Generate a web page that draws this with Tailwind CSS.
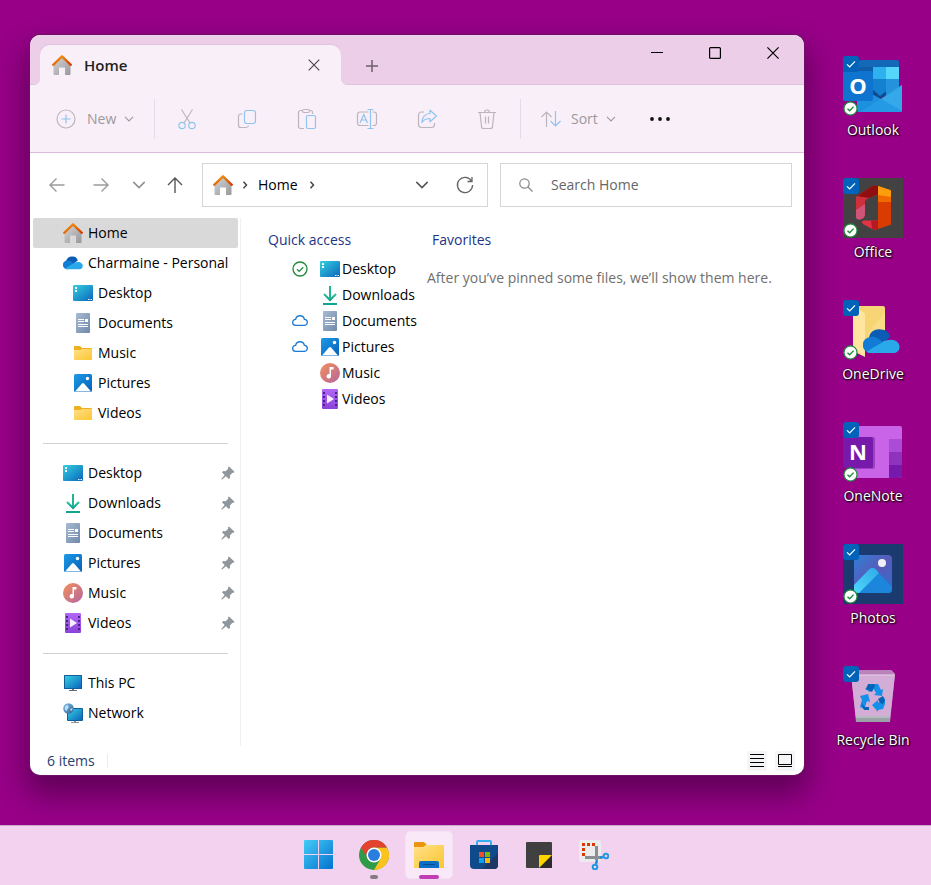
<!DOCTYPE html>
<html lang="en">

<head>
    <meta charset="UTF-8">
    <meta name="viewport" content="width=device-width, initial-scale=1.0">
    <title>Home - File Explorer</title>
    <script src="https://cdn.jsdelivr.net/npm/@tailwindcss/browser@4"></script>
</head>

<body class="flex min-h-screen flex-col bg-[#980088] font-['Open_Sans','Noto_Sans',sans-serif] text-sm text-black">

    <!-- shared icons -->
    <svg class="absolute size-0" aria-hidden="true">
        <defs>
            <linearGradient id="g-roof" x1="0" y1="0" x2="1" y2="1">
                <stop offset="0" stop-color="#f5a010" />
                <stop offset="1" stop-color="#d83b01" />
            </linearGradient>
            <linearGradient id="g-wall" x1="0" y1="0" x2="1" y2="1">
                <stop offset="0" stop-color="#d4d4d6" />
                <stop offset="1" stop-color="#98989c" />
            </linearGradient>
            <linearGradient id="g-screen" x1="0" y1="0" x2="1" y2="1">
                <stop offset="0" stop-color="#35d0e0" />
                <stop offset="1" stop-color="#0a66bd" />
            </linearGradient>
            <linearGradient id="g-doc" x1="0" y1="0" x2="1" y2="1">
                <stop offset="0" stop-color="#a9bbd2" />
                <stop offset="1" stop-color="#6f89aa" />
            </linearGradient>
            <linearGradient id="g-folder" x1="0" y1="0" x2="1" y2="1">
                <stop offset="0" stop-color="#ffe08a" />
                <stop offset="1" stop-color="#fcc630" />
            </linearGradient>
            <linearGradient id="g-pic" x1="0" y1="0" x2="1" y2="1">
                <stop offset="0" stop-color="#1d9be6" />
                <stop offset="1" stop-color="#0760b8" />
            </linearGradient>
            <linearGradient id="g-music" x1="0" y1="0" x2="1" y2="1">
                <stop offset="0" stop-color="#f2915a" />
                <stop offset="1" stop-color="#b565a0" />
            </linearGradient>
            <linearGradient id="g-video" x1="0" y1="0" x2="0" y2="1">
                <stop offset="0" stop-color="#b268f5" />
                <stop offset="1" stop-color="#8a42da" />
            </linearGradient>
            <linearGradient id="g-down" x1="0" y1="0" x2="0" y2="1">
                <stop offset="0" stop-color="#2ec49a" />
                <stop offset="1" stop-color="#0c9d8c" />
            </linearGradient>
            <linearGradient id="g-globe" x1="0" y1="0" x2="1" y2="1">
                <stop offset="0" stop-color="#7fc0ee" />
                <stop offset="1" stop-color="#33618f" />
            </linearGradient>
            <linearGradient id="g-win" x1="0" y1="0" x2="1" y2="1">
                <stop offset="0" stop-color="#44ccf5" />
                <stop offset="1" stop-color="#0572d0" />
            </linearGradient>
        </defs>
        <symbol id="home" viewBox="0 0 20 20">
            <path d="M1.500 10 10 2.500l8.500 7.500V19a1 1 0 0 1-1 1H13v-7.500H7V20H2.500a1 1 0 0 1-1-1z" fill="url(#g-wall)" />
            <path d="M1.200 9.800 10 1.300l8.800 8.500" fill="none" stroke="url(#g-roof)" stroke-width="2.300" stroke-linecap="round" stroke-linejoin="round" />
        </symbol>
        <symbol id="onedrive" viewBox="20 23 37 37">
            <path d="M26 38c1-7 7-9.500 12-8.500 5 0 8 3 9.500 7.500L36 45z" fill="#0a5cb5" />
            <path d="M28 53a8 8 0 0 1-.500-16c4-1 7 1 9.500 3l6 4-14 9z" fill="#117bd6" />
            <path d="M23.500 51.500 40 42c8-5 17-1 16.500 5 0 4-3 6-6.500 6H28c-2 0-3.500-.5-4.500-1.500z" fill="#2aa9ea" />
        </symbol>
        <symbol id="desktop" viewBox="0 0 20 20">
            <rect y="2" width="20" height="16" rx="1" fill="url(#g-screen)" />
            <path d="M2 4h2v2H2zM2 7h2v2H2zM15 16h1.500v1H15zM17.500 16H19v1h-1.500z" fill="#fff" />
        </symbol>
        <symbol id="documents" viewBox="0 0 20 20">
            <rect x="3" width="14" height="20" rx="1" fill="url(#g-doc)" />
            <path d="M5 6h6v1H5zM5 8h6v1H5zM12 6h3v3h-3zM5 11h10v1H5zM5 13h10v1H5z" fill="#fff" />
        </symbol>
        <symbol id="folder" viewBox="0 0 20 20">
            <path d="M1 4a1 1 0 0 1 1-1h5l2 2h9a1 1 0 0 1 1 1v10H1z" fill="#eeb11e" />
            <path d="M1 7h6.500L9 6h10v10.200a.8.8 0 0 1-.8.800H1.800a.8.8 0 0 1-.8-.800z" fill="url(#g-folder)" />
        </symbol>
        <symbol id="pictures" viewBox="0 0 20 20">
            <rect x="1" y="1" width="18" height="18" rx="1.500" fill="url(#g-pic)" />
            <path d="M2 18.500 9 10.500a1.400 1.400 0 0 1 2 0l7 8z" fill="#fff" />
            <circle cx="14.500" cy="5.500" r="1.700" fill="#fff" />
        </symbol>
        <symbol id="music" viewBox="0 0 20 20">
            <circle cx="10" cy="10" r="10" fill="url(#g-music)" />
            <path d="M9.500 4h4v2.500H11v6.700a2.200 2.200 0 1 1-1.500-2z" fill="#fff" />
        </symbol>
        <symbol id="videos" viewBox="0 0 20 20">
            <rect x="2" width="16" height="20" rx="1" fill="url(#g-video)" />
            <path d="M3 3h2v2H3zM3 7h2v2H3zM3 11h2v2H3zM3 15h2v2H3zM15 3h2v2h-2zM15 7h2v2h-2zM15 11h2v2h-2zM15 15h2v2h-2z" fill="#4b2285" />
            <path d="m7 5.500 7 4.500-7 4.500z" fill="#f7effe" />
        </symbol>
        <symbol id="downloads" viewBox="0 0 20 20">
            <path d="M4 9 10 15l6-6" fill="none" stroke="url(#g-down)" stroke-width="2" />
            <rect x="3" y="18" width="14" height="2" fill="#0fa58f" />
            <rect x="9" y="1" width="2" height="13" fill="#20b597" />
        </symbol>
        <symbol id="thispc" viewBox="0 0 20 20">
            <path d="M9 15h2v2h3v1H6v-1h3z" fill="#69707a" />
            <rect x="1" y="2" width="18" height="14" rx=".5" fill="#135e99" />
            <rect x="2" y="3" width="16" height="12" fill="url(#g-screen)" />
        </symbol>
        <symbol id="network" viewBox="0 0 20 20">
            <path d="M11 17h2v2h3v1H8v-1h3z" fill="#8c939c" />
            <rect x="4" y="5" width="16" height="13" rx="1" fill="#135e99" />
            <rect x="5" y="6" width="14" height="11" fill="url(#g-screen)" />
            <circle cx="5.500" cy="5.500" r="5.300" fill="url(#g-globe)" />
            <path d="M3 2.500c2-.5 3 .5 2.500 2S3.500 6 4 8C2 7.500 1 5 3 2.500zM7 6.500 9.500 5 9 8z" fill="#c3e2f7" />
        </symbol>
        <symbol id="pin" viewBox="0 0 14 14">
            <path d="m8 .5 5.500 5.300-1.200 1.200-.9-.2-2.500 2.700.2 2.300-1.300 1.300L5 10.300 1.200 13.500H.5v-.7L3.700 9 1 6.200 2.300 5l2.400.2L7.200 2.700 6.900 1.600z" fill="#8f969c" />
        </symbol>
        <symbol id="chevron-down" viewBox="0 0 16 16">
            <path d="m2 5 6 6 6-6" fill="none" stroke="currentColor" stroke-width="1.700" stroke-linecap="round" />
        </symbol>
        <symbol id="chevron-right" viewBox="0 0 8 8">
            <path d="m2.500.8 3 3.200-3 3.200" fill="none" stroke="currentColor" stroke-width="1.500" />
        </symbol>
        <symbol id="cloud" viewBox="0 0 16 16">
            <path d="M3.800 12.300a3 3 0 0 1-.2-6 4.500 4.500 0 0 1 8.800 0 3 3 0 0 1-.2 6z" fill="none" stroke="#1a7ad4" stroke-width="1.300" />
        </symbol>
        <symbol id="tick" viewBox="0 0 16 16">
            <path d="m4 8.300 2.700 2.700L12 5.300" fill="none" stroke="currentColor" stroke-width="1.200" />
        </symbol>
        <symbol id="synced" viewBox="0 0 16 16">
            <circle cx="8" cy="8" r="7" fill="#fff" stroke="#1e8a3a" stroke-width="1.300" />
            <path d="m4.800 8.200 2.300 2.300 4.200-4.500" fill="none" stroke="#1e8a3a" stroke-width="1.500" />
        </symbol>
    </svg>

    <div class="flex flex-1">
        <!-- explorer window -->
        <section class="mt-[35px] mb-[50px] ml-[30px] flex min-w-0 flex-1 flex-col overflow-hidden rounded-[10px] bg-white shadow-[0_0_0_1px_#6d1065,0_16px_30px_4px_rgba(40,0,40,0.5)]">
            <header class="flex h-[50px] items-start bg-[#ecceE8] shadow-[inset_0_-1px_#dfc3de]">
                <svg class="ml-1 size-1.5 self-end" viewBox="0 0 6 6">
                    <path d="M6 0v6H0a6 6 0 0 0 6-6z" fill="#f9eff8" />
                </svg>
                <div class="flex h-10 w-[301px] items-center self-end rounded-t-[10px] bg-[#f9eff8] pr-[17px] pl-3 shadow-[0_-1px_1px_#e0c6de]">
                    <svg class="size-5"><use href="#home" /></svg>
                    <h1 class="ml-3 flex-1 text-[15px] leading-5 font-semibold text-[#222]">Home</h1>
                    <button type="button" aria-label="Close tab" class="flex size-5 items-center justify-center">
                        <svg class="size-3" viewBox="0 0 12 12" fill="none" stroke="#444" stroke-width="1.100"><path d="m.7.7 10.600 10.600M11.300.7.7 11.300" /></svg>
                    </button>
                </div>
                <svg class="size-1.5 self-end" viewBox="0 0 6 6">
                    <path d="M0 0v6h6a6 6 0 0 1-6-6z" fill="#f9eff8" />
                </svg>
                <button type="button" aria-label="New tab" class="ml-[15px] flex h-[39px] w-5 items-center justify-center self-end">
                    <svg class="size-3" viewBox="0 0 12 12" fill="none" stroke="#6b5f6b" stroke-width="1.500"><path d="M6 0v12M0 6h12" /></svg>
                </button>
                <div class="mr-0.5 ml-auto flex">
                    <button type="button" aria-label="Minimize" class="flex h-9 w-[58px] items-center justify-center">
                        <svg class="size-3" viewBox="0 0 12 12"><path d="M0 5h12v1H0z" /></svg>
                    </button>
                    <button type="button" aria-label="Maximize" class="flex h-9 w-[58px] items-center justify-center">
                        <svg class="size-3" viewBox="0 0 12 12" fill="none" stroke="#000" stroke-width="1.200"><rect x=".6" y=".6" width="10.800" height="10.800" rx="1" /></svg>
                    </button>
                    <button type="button" aria-label="Close" class="flex h-9 w-[58px] items-center justify-center">
                        <svg class="size-3" viewBox="0 0 12 12" fill="none" stroke="#000" stroke-width="1.200"><path d="m.4.4 11.200 11.200M11.600.4.4 11.600" /></svg>
                    </button>
                </div>
            </header>

            <!-- command bar -->
            <div class="flex h-[68px] items-center border-b border-[#dcbcda] bg-[#f9eff8] pl-[26px] text-[#9c989c]">
                <button type="button" class="flex w-[98px] items-center">
                    <svg class="size-5" viewBox="0 0 20 20" fill="none" stroke-width="1.200">
                        <circle cx="10" cy="10" r="9" stroke="#bcb6bc" />
                        <path d="M10 5.500v9M5.500 10h9" stroke="#90c4ee" />
                    </svg>
                    <span class="ml-[11px]">New</span>
                    <svg class="ml-2 size-2.5"><use href="#chevron-down" /></svg>
                </button>
                <div class="mr-[2px] h-10 w-px bg-[#e6dae6]"></div>
                <button type="button" aria-label="Cut" class="flex w-[60px] justify-center">
                    <svg class="size-[22px]" viewBox="0 0 22 22" fill="none" stroke-width="1.200">
                        <path d="M5.500 1.500 14 15M16.500 1.500 8 15" stroke="#bcb6bc" />
                        <circle cx="6" cy="17.500" r="3.200" stroke="#90c4ee" />
                        <circle cx="16" cy="17.500" r="3.200" stroke="#90c4ee" />
                    </svg>
                </button>
                <button type="button" aria-label="Copy" class="flex w-[60px] justify-center">
                    <svg class="size-[22px]" viewBox="0 0 22 22" fill="none" stroke-width="1.200">
                        <path d="M6.500 6H4.700A2.200 2.200 0 0 0 2.500 8.200v9A2.300 2.300 0 0 0 4.800 19.500H10a2.500 2.500 0 0 0 2.500-2" stroke="#bcb6bc" />
                        <rect x="8.500" y="2.500" width="11" height="13" rx="2.500" stroke="#90c4ee" />
                    </svg>
                </button>
                <button type="button" aria-label="Paste" class="flex w-[60px] justify-center">
                    <svg class="size-[22px]" viewBox="0 0 22 22" fill="none" stroke-width="1.200">
                        <path d="M8 20.500H4.500a2 2 0 0 1-2-2V4.500a2 2 0 0 1 2-2h2M13.500 2.500h1a2 2 0 0 1 2 2V6" stroke="#bcb6bc" />
                        <rect x="6.500" y="1.500" width="7" height="3" rx="1.500" stroke="#bcb6bc" />
                        <rect x="10.500" y="7.500" width="9" height="13" rx="1.500" stroke="#90c4ee" />
                    </svg>
                </button>
                <button type="button" aria-label="Rename" class="flex w-[60px] justify-center">
                    <svg class="size-[22px]" viewBox="0 0 22 22" fill="none" stroke-width="1.200">
                        <path d="M12.500 4H4a2.500 2.500 0 0 0-2.500 2.500v8.500A2.500 2.500 0 0 0 4 17.500h8.500M16.500 4h1.500a2.500 2.500 0 0 1 2.500 2.500v8.500a2.500 2.500 0 0 1-2.500 2.500h-1.500" stroke="#bcb6bc" />
                        <path d="M14.500 1.500v19M11.500 1.500h6M11.500 20.500h6M4 15 7.800 6.500 11.500 15M5.500 12h4.600" stroke="#90c4ee" />
                    </svg>
                </button>
                <button type="button" aria-label="Share" class="flex w-[60px] justify-center">
                    <svg class="size-[22px]" viewBox="0 0 22 22" fill="none" stroke-width="1.200">
                        <path d="M8 4H5.500A3 3 0 0 0 2.500 7v9.500a3 3 0 0 0 3 3h10a3 3 0 0 0 3-3V15" stroke="#bcb6bc" />
                        <path d="M14 2.200 20.500 8 14 13.800V10.500c-4 0-6.500 1.500-8 4 0-5 3-9 8-9z" stroke="#90c4ee" stroke-linejoin="round" />
                    </svg>
                </button>
                <button type="button" aria-label="Delete" class="flex w-[60px] justify-center">
                    <svg class="size-[22px]" viewBox="0 0 22 22" fill="none" stroke="#bcb6bc" stroke-width="1.200">
                        <path d="M2 4.500h18M8.500 4.500a2.500 2.500 0 0 1 5 0M4 4.500l1.500 14a2 2 0 0 0 2 2h7a2 2 0 0 0 2-2L18 4.500M9.500 8.500v7M12.500 8.500v7" />
                    </svg>
                </button>
                <div class="mr-5 ml-[3px] h-10 w-px bg-[#e6dae6]"></div>
                <button type="button" class="flex items-center">
                    <svg class="size-5" viewBox="0 0 20 20" fill="none" stroke-width="1.200">
                        <path d="M5.500 18V3M.5 8l5-5 5 5" stroke="#bcb6bc" />
                        <path d="M14.500 2v15M9.500 12l5 5 5-5" stroke="#90c4ee" />
                    </svg>
                    <span class="ml-2.5">Sort</span>
                    <svg class="ml-2 size-2.5"><use href="#chevron-down" /></svg>
                </button>
                <button type="button" aria-label="More" class="ml-8 flex w-6 justify-center">
                    <svg class="h-1 w-5" viewBox="0 0 20 4" fill="#111"><circle cx="2" cy="2" r="1.900" /><circle cx="10" cy="2" r="1.900" /><circle cx="18" cy="2" r="1.900" /></svg>
                </button>
            </div>

            <!-- address bar -->
            <div class="flex h-[65px] items-start pt-2.5 pr-3 pl-[5px]">
                <button type="button" aria-label="Back" class="flex h-11 w-11 items-center justify-center">
                    <svg class="size-4" viewBox="0 0 16 16" fill="none" stroke="#9a9a9a" stroke-width="1.400"><path d="M15.500 8H1M7.500 1.500 1 8l6.500 6.500" /></svg>
                </button>
                <button type="button" aria-label="Forward" class="flex h-11 w-11 items-center justify-center">
                    <svg class="size-4" viewBox="0 0 16 16" fill="none" stroke="#9a9a9a" stroke-width="1.400"><path d="M.5 8H15M8.500 1.500 15 8l-6.500 6.500" /></svg>
                </button>
                <button type="button" aria-label="Recent locations" class="flex h-11 w-8 items-center justify-center text-[#8f8f8f]">
                    <svg class="size-3.5"><use href="#chevron-down" /></svg>
                </button>
                <button type="button" aria-label="Up" class="flex h-11 w-10 items-center justify-center">
                    <svg class="size-4" viewBox="0 0 16 16" fill="none" stroke="#555" stroke-width="1.400"><path d="M8 16V1M1 8l7-7 7 7" /></svg>
                </button>
                <div class="ml-[7px] flex h-11 min-w-0 flex-1 items-center border border-[#d6d6d6] pr-3 pl-2.5">
                    <svg class="size-5"><use href="#home" /></svg>
                    <svg class="ml-2 size-2 text-[#444]"><use href="#chevron-right" /></svg>
                    <a href="#" class="ml-[9px]">Home</a>
                    <svg class="ml-2.5 size-2 text-[#444]"><use href="#chevron-right" /></svg>
                    <button type="button" aria-label="Previous locations" class="ml-auto text-[#555]">
                        <svg class="size-3.5"><use href="#chevron-down" /></svg>
                    </button>
                    <button type="button" aria-label="Refresh" class="ml-[26px]">
                        <svg class="size-5" viewBox="0 0 20 20" fill="none" stroke="#666" stroke-width="1.300"><path d="M16.500 6A7.600 7.600 0 1 0 17.600 10M17 2v4.500H12.500" /></svg>
                    </button>
                </div>
                <label class="ml-3 flex h-11 w-[292px] items-center border border-[#d6d6d6] px-[17px]">
                    <svg class="size-4" viewBox="0 0 16 16" fill="none" stroke="#888" stroke-width="1.200"><circle cx="6.500" cy="6.500" r="4.700" /><path d="m10 10 4.500 4.500" /></svg>
                    <input type="search" aria-label="Search Home" placeholder="Search Home" class="ml-[17px] min-w-0 flex-1 outline-none placeholder:text-[#666]">
                </label>
            </div>

            <div class="flex flex-1">
                <!-- navigation pane -->
                <nav class="w-[211px] shrink-0 border-r border-[#f0f0f0] pr-0.5 pl-[3px]">
                    <ul>
                        <li><a href="#" class="flex h-[30px] items-center gap-[5px] rounded-xs bg-[#d9d9d9] pl-[30px]"><svg class="size-5"><use href="#home" /></svg>Home</a></li>
                        <li><a href="#" class="flex h-[30px] items-center gap-[5px] pl-[30px] whitespace-nowrap"><svg class="size-5"><use href="#onedrive" /></svg>Charmaine - Personal</a></li>
                        <li><a href="#" class="flex h-[30px] items-center gap-[5px] pl-10"><svg class="size-5"><use href="#desktop" /></svg>Desktop</a></li>
                        <li><a href="#" class="flex h-[30px] items-center gap-[5px] pl-10"><svg class="size-5"><use href="#documents" /></svg>Documents</a></li>
                        <li><a href="#" class="flex h-[30px] items-center gap-[5px] pl-10"><svg class="size-5"><use href="#folder" /></svg>Music</a></li>
                        <li><a href="#" class="flex h-[30px] items-center gap-[5px] pl-10"><svg class="size-5"><use href="#pictures" /></svg>Pictures</a></li>
                        <li><a href="#" class="flex h-[30px] items-center gap-[5px] pl-10"><svg class="size-5"><use href="#folder" /></svg>Videos</a></li>
                    </ul>
                    <hr class="mt-[15px] mr-2.5 mb-3.5 ml-2.5 border-[#d2d2d2]">
                    <ul>
                        <li><a href="#" class="flex h-[30px] items-center gap-[5px] pr-[3px] pl-[30px]"><svg class="size-5"><use href="#desktop" /></svg>Desktop<svg class="ml-auto size-3.5"><use href="#pin" /></svg></a></li>
                        <li><a href="#" class="flex h-[30px] items-center gap-[5px] pr-[3px] pl-[30px]"><svg class="size-5"><use href="#downloads" /></svg>Downloads<svg class="ml-auto size-3.5"><use href="#pin" /></svg></a></li>
                        <li><a href="#" class="flex h-[30px] items-center gap-[5px] pr-[3px] pl-[30px]"><svg class="size-5"><use href="#documents" /></svg>Documents<svg class="ml-auto size-3.5"><use href="#pin" /></svg></a></li>
                        <li><a href="#" class="flex h-[30px] items-center gap-[5px] pr-[3px] pl-[30px]"><svg class="size-5"><use href="#pictures" /></svg>Pictures<svg class="ml-auto size-3.5"><use href="#pin" /></svg></a></li>
                        <li><a href="#" class="flex h-[30px] items-center gap-[5px] pr-[3px] pl-[30px]"><svg class="size-5"><use href="#music" /></svg>Music<svg class="ml-auto size-3.5"><use href="#pin" /></svg></a></li>
                        <li><a href="#" class="flex h-[30px] items-center gap-[5px] pr-[3px] pl-[30px]"><svg class="size-5"><use href="#videos" /></svg>Videos<svg class="ml-auto size-3.5"><use href="#pin" /></svg></a></li>
                    </ul>
                    <hr class="mt-[15px] mr-2.5 mb-3.5 ml-2.5 border-[#d2d2d2]">
                    <ul>
                        <li><a href="#" class="flex h-[30px] items-center gap-[5px] pl-[30px]"><svg class="size-5"><use href="#thispc" /></svg>This PC</a></li>
                        <li><a href="#" class="flex h-[30px] items-center gap-[5px] pl-[30px]"><svg class="size-5"><use href="#network" /></svg>Network</a></li>
                    </ul>
                </nav>

                <main class="flex min-w-0 flex-1 pt-2.5 pl-[27px]">
                    <section class="w-[159px] shrink-0">
                        <h2 class="mb-1 h-6 leading-6 text-[#1d3585]">Quick access</h2>
                        <ul>
                            <li class="flex h-[26px] items-center pl-6"><svg class="size-4" viewBox="0 0 16 16" fill="none" stroke="#1e8a3a" stroke-width="1.300"><circle cx="8" cy="8" r="7" /><path d="m5 8.200 2.200 2.200 4-4.200" /></svg><svg class="mr-0.5 ml-3 size-5"><use href="#desktop" /></svg><a href="#">Desktop</a></li>
                            <li class="flex h-[26px] items-center pl-[52px]"><svg class="mr-0.5 size-5"><use href="#downloads" /></svg><a href="#">Downloads</a></li>
                            <li class="flex h-[26px] items-center pl-6"><svg class="size-4"><use href="#cloud" /></svg><svg class="mr-0.5 ml-3 size-5"><use href="#documents" /></svg><a href="#">Documents</a></li>
                            <li class="flex h-[26px] items-center pl-6"><svg class="size-4"><use href="#cloud" /></svg><svg class="mr-0.5 ml-3 size-5"><use href="#pictures" /></svg><a href="#">Pictures</a></li>
                            <li class="flex h-[26px] items-center pl-[52px]"><svg class="mr-0.5 size-5"><use href="#music" /></svg><a href="#">Music</a></li>
                            <li class="flex h-[26px] items-center pl-[52px]"><svg class="mr-0.5 size-5"><use href="#videos" /></svg><a href="#">Videos</a></li>
                        </ul>
                    </section>
                    <section class="min-w-0 flex-1">
                        <h2 class="h-6 pl-[5px] leading-6 text-[#1d3585]">Favorites</h2>
                        <p class="mt-3.5 leading-6 text-[#6f6f6f]">After you’ve pinned some files, we’ll show them here.</p>
                    </section>
                </main>
            </div>

            <footer class="flex h-[29px] items-center pr-[9px] pl-[17px] text-[#26416f]">
                <span>6 items</span>
                <div class="ml-3 h-3.5 w-px bg-[#ececec]"></div>
                <button type="button" aria-label="Details view" class="mr-2 ml-auto flex size-5 items-center justify-center rounded-xs bg-[#f5f5f7]">
                    <svg class="size-3.5" viewBox="0 0 14 14" fill="#000"><path d="M0 0h14v1H0zM0 4h14v1H0zM0 8h14v1H0zM0 12h14v1H0z" /></svg>
                </button>
                <button type="button" aria-label="Large icons view" class="flex size-5 items-center justify-center rounded-xs bg-[#f5f5f7]">
                    <svg class="size-3.5" viewBox="0 0 14 14"><path d="M.5.5h13v10H.5z" fill="none" stroke="#000" /><path d="M0 12h14v1H0z" /></svg>
                </button>
            </footer>
        </section>

        <!-- desktop shortcuts -->
        <ul class="w-[127px] shrink-0 pt-14 pr-[1px] pl-3 text-white">
            <li class="flex h-[122px] flex-col items-center">
                <div class="relative size-[60px]">
                    <svg class="size-[60px]" viewBox="0 0 60 60">
                        <path d="M16 6a2 2 0 0 1 2-2h36a2 2 0 0 1 2 2v34H16z" fill="#1468b8" />
                        <path d="M16 11h14v15H16z" fill="#0f5ca8" />
                        <path d="M30 11h13v12H30z" fill="#2eb2ee" />
                        <path d="M43 11h13v12H43z" fill="#55d6fb" />
                        <path d="M30 23h13v17H30z" fill="#1480d0" />
                        <path d="M43 23h13v15H43z" fill="#2ba6e8" />
                        <path d="M56 25v6L37 43l-9-5v-6l9 8z" fill="#0f4a90" />
                        <path d="M56 23v9l-13 8V23z" fill="#2492dc" />
                        <path d="m14 30 24 13 21-14v25a2 2 0 0 1-2 2H16a2 2 0 0 1-2-2z" fill="#1d90df" />
                        <path d="M59 29v25a2 2 0 0 1-2 2H18l20-13z" fill="#35a8ea" />
                        <path d="m38 43 21 12-2 1H18z" fill="#2499e4" />
                        <rect y="15" width="30" height="30" rx="2" fill="#0f74d0" />
                        <text x="15" y="37.500" text-anchor="middle" font-family="Open Sans, sans-serif" font-size="22" font-weight="700" fill="#fff">O</text>
                    </svg>
                    <input type="checkbox" checked aria-label="Select Outlook" class="absolute top-0 left-0 size-4 appearance-none rounded-[3px] bg-[#0062b8]">
                    <svg class="pointer-events-none absolute top-0 left-0 size-4"><use href="#tick" /></svg>
                    <svg class="absolute bottom-0 left-0 size-[15px]"><use href="#synced" /></svg>
                </div>
                <a href="#" class="mt-0.5 leading-6 [text-shadow:1px_1px_2px_#000,0_0_2px_#000]">Outlook</a>
            </li>
            <li class="flex h-[122px] flex-col items-center">
                <div class="relative size-[60px]">
                    <svg class="size-[60px]" viewBox="0 0 60 60">
                        <rect width="60" height="60" fill="#424242" />
                        <path d="M13 20c0-1 .5-2 1.500-2.500L30 7.500 35 8v8l-11 5c-1.500.7-2 1.500-2 3v12c0 3-2 5-5 5.500-2 0-4-.5-4-2.500z" fill="#cf2f3a" />
                        <path d="M14 18 30 7.500 35 8v8l-9 4z" fill="#8f0f10" />
                        <path d="m13 32 9-6v10c0 3-2 5-5 5.500-2 0-4-.5-4-2.500z" fill="#cf5578" />
                        <path d="m35 8 12 4c.7.300 1 .7 1 1.500v32c0 .800-.3 1.200-1 1.500l-12 4z" fill="#d93b00" />
                        <path d="m35 8 12 4c.7.300 1 .7 1 1.500V24H35z" fill="#f06a00" />
                        <path d="m35 8 12 4c.7.300 1 .7 1 1.500V19l-13-2z" fill="#fb9d0c" />
                        <path d="M19 44c0-1 1-1.500 2-1.500h14V51c-3 1.200-5 .5-7-.500l-8-4.500c-.7-.5-1-1-1-2z" fill="#e03445" />
                        <path d="M28 42.500h7V51c-3 1.200-4 .5-6-.500z" fill="#b51a22" />
                    </svg>
                    <input type="checkbox" checked aria-label="Select Office" class="absolute top-0 left-0 size-4 appearance-none rounded-[3px] bg-[#0062b8]">
                    <svg class="pointer-events-none absolute top-0 left-0 size-4"><use href="#tick" /></svg>
                    <svg class="absolute bottom-0 left-0 size-[15px]"><use href="#synced" /></svg>
                </div>
                <a href="#" class="mt-0.5 leading-6 [text-shadow:1px_1px_2px_#000,0_0_2px_#000]">Office</a>
            </li>
            <li class="flex h-[122px] flex-col items-center">
                <div class="relative size-[60px]">
                    <svg class="size-[60px]" viewBox="0 0 60 60">
                        <path d="M10 8a2 2 0 0 1 2-2h28a2 2 0 0 1 2 2v42H20z" fill="#f7d574" />
                        <path d="M26 32 42 12v38H20z" fill="#f9dc86" />
                        <path d="M10 6 20 12a3 3 0 0 1 2 3v42L12 52a3 3 0 0 1-2-3z" fill="#ffe5a0" />
                        <use href="#onedrive" x="20" y="23" width="37" height="37" />
                    </svg>
                    <input type="checkbox" checked aria-label="Select OneDrive" class="absolute top-0 left-0 size-4 appearance-none rounded-[3px] bg-[#0062b8]">
                    <svg class="pointer-events-none absolute top-0 left-0 size-4"><use href="#tick" /></svg>
                    <svg class="absolute bottom-0 left-0 size-[15px]"><use href="#synced" /></svg>
                </div>
                <a href="#" class="mt-0.5 leading-6 [text-shadow:1px_1px_2px_#000,0_0_2px_#000]">OneDrive</a>
            </li>
            <li class="flex h-[122px] flex-col items-center">
                <div class="relative size-[60px]">
                    <svg class="size-[60px]" viewBox="0 0 60 60">
                        <rect x="7" y="4" width="52" height="52" rx="2" fill="#c964e8" />
                        <path d="M46 17h13v13H46z" fill="#ab4cd6" />
                        <path d="M46 30h13v13H46z" fill="#8f33bd" />
                        <path d="M46 43h13v11a2 2 0 0 1-2 2H46z" fill="#7719aa" />
                        <rect x="7" y="15" width="25" height="32" rx="2" fill="#9a42bd" />
                        <rect y="15" width="30" height="31" rx="2" fill="#7719aa" />
                        <text x="15" y="38" text-anchor="middle" font-family="Open Sans, sans-serif" font-size="22" font-weight="700" fill="#fff">N</text>
                    </svg>
                    <input type="checkbox" checked aria-label="Select OneNote" class="absolute top-0 left-0 size-4 appearance-none rounded-[3px] bg-[#0062b8]">
                    <svg class="pointer-events-none absolute top-0 left-0 size-4"><use href="#tick" /></svg>
                    <svg class="absolute bottom-0 left-0 size-[15px]"><use href="#synced" /></svg>
                </div>
                <a href="#" class="mt-0.5 leading-6 [text-shadow:1px_1px_2px_#000,0_0_2px_#000]">OneNote</a>
            </li>
            <li class="flex h-[122px] flex-col items-center">
                <div class="relative size-[60px]">
                    <svg class="size-[60px]" viewBox="0 0 60 60">
                        <defs>
                            <linearGradient id="g-photo" x1="0" y1="0" x2="1" y2="1">
                                <stop offset="0" stop-color="#2d7fd8" />
                                <stop offset=".5" stop-color="#5a5ab8" />
                                <stop offset="1" stop-color="#2b6fd0" />
                            </linearGradient>
                            <linearGradient id="g-hill" x1="0" y1="1" x2="1" y2="0">
                                <stop offset="0" stop-color="#4fd8fa" />
                                <stop offset="1" stop-color="#2fa8e8" />
                            </linearGradient>
                        </defs>
                        <rect width="60" height="60" fill="#1a3a70" />
                        <rect x="11" y="11" width="38" height="38" rx="4" fill="url(#g-photo)" />
                        <path d="M20 40 30 26l4 1 15 16v2a4 4 0 0 1-4 4H15z" fill="#1c86dc" />
                        <path d="M11 41 26 25.500a5 5 0 0 1 7 0l3 3.500-20 20h-1a4 4 0 0 1-4-4z" fill="url(#g-hill)" />
                        <circle cx="39" cy="19" r="4" fill="#f0f0f8" />
                    </svg>
                    <input type="checkbox" checked aria-label="Select Photos" class="absolute top-0 left-0 size-4 appearance-none rounded-[3px] bg-[#0062b8]">
                    <svg class="pointer-events-none absolute top-0 left-0 size-4"><use href="#tick" /></svg>
                    <svg class="absolute bottom-0 left-0 size-[15px]"><use href="#synced" /></svg>
                </div>
                <a href="#" class="mt-0.5 leading-6 [text-shadow:1px_1px_2px_#000,0_0_2px_#000]">Photos</a>
            </li>
            <li class="flex h-[122px] flex-col items-center">
                <div class="relative size-[60px]">
                    <svg class="size-[60px]" viewBox="0 0 60 60">
                        <path d="M8 8 14 4h34l4 4-5 48H13z" fill="#c79ac8" />
                        <path d="M8 8h44l-5 44H13z" fill="#d3add6" />
                        <path d="M14 4h34l4 4-1 1H9z" fill="#b983ba" />
                        <path d="M13 50h34l-.5 6h-33z" fill="#9aa2a8" />
                        <path d="M13 50h34v2H13z" fill="#b5bcc0" />
                        <path d="M9 9h42" stroke="#e9d2ea" />
                        <path d="m27 18 8 0 3 6 2-1-1 7-8-1 2-2-3-5-3 4-5-3z" fill="#1590e8" />
                        <path d="m25 18 6 0 1 2-3 6-6-3z" fill="#0763b5" />
                        <path d="m17 30 8-2 2 8-3-1-2 6 1 3-6-3 2-7z" fill="#1590e8" />
                        <path d="m18 37 4 4h4v3h-5z" fill="#0763b5" />
                        <path d="m29 39 6-5v2.500l5-1 2-3.500v6l-2 5-5 1v2z" fill="#1590e8" />
                        <path d="m35 33 5-3 2 4-2 4-3-1z" fill="#0763b5" />
                    </svg>
                    <input type="checkbox" checked aria-label="Select Recycle Bin" class="absolute top-0 left-0 size-4 appearance-none rounded-[3px] bg-[#0062b8]">
                    <svg class="pointer-events-none absolute top-0 left-0 size-4"><use href="#tick" /></svg>
                </div>
                <a href="#" class="mt-0.5 leading-6 whitespace-nowrap [text-shadow:1px_1px_2px_#000,0_0_2px_#000]">Recycle Bin</a>
            </li>
        </ul>
    </div>

    <!-- taskbar -->
    <footer class="flex h-[60px] items-center justify-center gap-[7px] border-t border-[#c9a8c9] bg-[#f3d2ef] pr-[18px] pb-px">
        <button type="button" aria-label="Start" class="flex size-12 items-center justify-center rounded-sm">
            <svg class="size-[30px]" viewBox="0 0 30 30">
                <path d="M1 0h13v14H0V1a1 1 0 0 1 1-1zM15 0h13a1 1 0 0 1 1 1v13H15zM0 15h14v14H1a1 1 0 0 1-1-1zM15 15h14v13a1 1 0 0 1-1 1H15z" fill="url(#g-win)" />
            </svg>
        </button>
        <button type="button" aria-label="Chrome" class="relative flex size-12 items-center justify-center rounded-sm">
            <svg class="size-[30px]" viewBox="0 0 30 30">
                <circle cx="15" cy="15" r="15" fill="#2f9a48" />
                <path d="M15 30a15 15 0 0 0 13-22.500H15L21.500 18.800z" fill="#fcc31e" />
                <path d="M2 7.500a15 15 0 0 1 26 0H15a7.500 7.500 0 0 0-6.500 11.300z" fill="#e5412f" />
                <circle cx="15" cy="15" r="7.500" fill="#fff" />
                <circle cx="15" cy="15" r="6" fill="#2b7de0" />
            </svg>
            <span class="absolute bottom-0 left-5 h-1 w-2 rounded-full bg-[#857b85]"></span>
        </button>
        <button type="button" aria-label="File Explorer" class="relative flex size-12 items-center justify-center rounded-[5px] border border-[#f4e2f3] bg-[#f9e9f8]">
            <svg class="h-[26px] w-[30px]" viewBox="0 0 30 26">
                <path d="M0 1a1 1 0 0 1 1-1h9l3 3h-1l-3 4H0z" fill="#ea9410" />
                <path d="M0 5h9l3-2h17a1 1 0 0 1 1 1v22H0z" fill="url(#g-folder)" />
                <path d="M5 26v-5a2 2 0 0 1 2-2h16a2 2 0 0 1 2 2v5z" fill="#0c6ec4" />
                <path d="M9 22h12v1H9z" fill="#084d90" />
            </svg>
            <span class="absolute -bottom-px left-[13px] h-1 w-5 rounded-full bg-[#c03db4]"></span>
        </button>
        <button type="button" aria-label="Microsoft Store" class="flex size-12 items-center justify-center rounded-sm">
            <svg class="size-[30px]" viewBox="0 0 30 30">
                <path d="M8 6V2a1 1 0 0 1 1-1h12a1 1 0 0 1 1 1v4" fill="none" stroke="#35b0ee" stroke-width="2" />
                <path d="M1 5h28v20a4 4 0 0 1-4 4H5a4 4 0 0 1-4-4z" fill="#0f4a8a" />
                <path d="m29 13-16 16h12a4 4 0 0 0 4-4z" fill="#1d3868" />
                <path d="M10 12h5v5h-5z" fill="#ef4f26" /><path d="M16 12h5v5h-5z" fill="#80b80a" />
                <path d="M10 18h5v5h-5z" fill="#0ba2ec" /><path d="M16 18h5v5h-5z" fill="#fbb90c" />
            </svg>
        </button>
        <button type="button" aria-label="Sticky Notes" class="flex size-12 items-center justify-center rounded-sm">
            <svg class="size-[26px]" viewBox="0 0 26 26">
                <rect width="26" height="26" rx="1" fill="#404040" />
                <path d="M26 13v12a1 1 0 0 1-1 1H13z" fill="#2b2b2b" />
                <path d="M13 14a1 1 0 0 1 1-1h12L13 26z" fill="#ffd500" />
            </svg>
        </button>
        <button type="button" aria-label="Snipping Tool" class="flex size-12 items-center justify-center rounded-sm">
            <svg class="size-[30px]" viewBox="0 0 30 30">
                <rect width="22" height="22" rx="3" fill="#ececee" />
                <path d="M3 3h3v3H3zM8 3h3v3H8zM13 3h3v3h-3zM3 8h3v3H3zM3 13h3v3H3z" fill="#d83b01" />
                <path d="M17.500 6v14M6 17.500h17" stroke="#8b8f94" stroke-width="3" />
                <path d="m18 20-1 4M21 17.500l3-.5" stroke="#1c90dc" stroke-width="2.500" />
                <circle cx="27" cy="16" r="2.300" fill="none" stroke="#2399e2" stroke-width="2" />
                <circle cx="16" cy="27" r="2.300" fill="none" stroke="#2399e2" stroke-width="2" />
            </svg>
        </button>
    </footer>
</body>

</html>
